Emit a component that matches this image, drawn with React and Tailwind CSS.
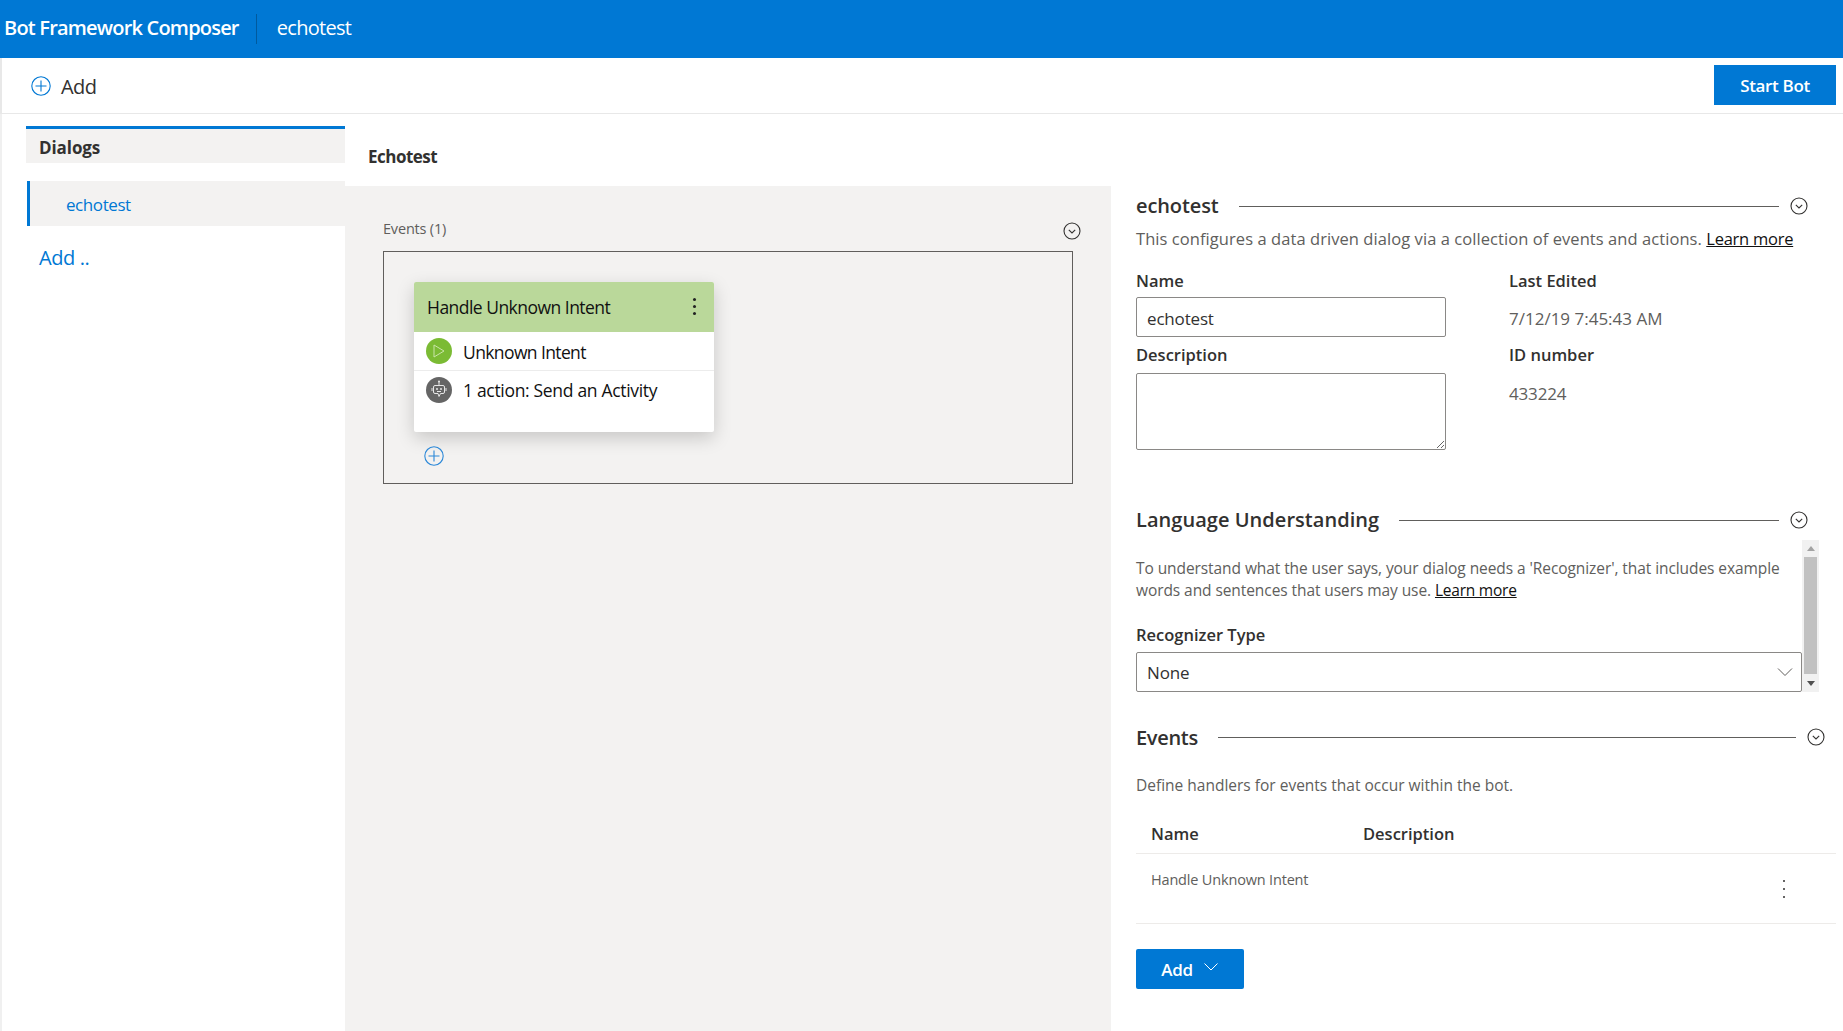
import React from 'react';

const ChevronCircle = ({ className = "" }) => (
  <svg width="18" height="18" viewBox="0 0 18 18" fill="none" stroke="#323130" className={className}>
    <circle cx="9" cy="9" r="8" strokeWidth="1.1" />
    <path d="M5.8 7.8 9 11l3.2-3.2" strokeWidth="1.1" />
  </svg>
);

const PlusCircle = ({ size = 20, color = "#0078d4" }) => (
  <svg width={size} height={size} viewBox="0 0 20 20" fill="none" stroke={color} strokeWidth="1.1">
    <circle cx="10" cy="10" r="9.2" />
    <path d="M10 4.5v11M4.5 10h11" />
  </svg>
);

const Dots = ({ dot = "bg-[#323130]", size = "w-[3px] h-[3px]", gap = "gap-[4px]" }) => (
  <div className={"flex flex-col " + gap}>
    <span className={"rounded-full " + size + " " + dot}></span>
    <span className={"rounded-full " + size + " " + dot}></span>
    <span className={"rounded-full " + size + " " + dot}></span>
  </div>
);

const SectionHead = ({ title, titleClass = "tracking-[-0.005em]" }) => (
  <div className="flex items-center h-[28px]">
    <h2 className={"text-[20px] font-semibold text-[#323130] leading-[28px] " + titleClass}>{title}</h2>
    <div className="h-px flex-1 bg-[#605e5c] ml-[20px] mr-[11px]"></div>
    <ChevronCircle />
  </div>
);

const FieldLabel = ({ children }) => (
  <label className="block text-[16.5px] font-semibold text-[#323130] leading-[24px]">{children}</label>
);

const Scrollbar = () => (
  <div className="absolute right-0 top-0 bottom-0 w-[17px] bg-[#f1f1f1] flex flex-col items-center">
    <svg width="8" height="17" viewBox="0 0 8 17" fill="#a3a3a3" className="shrink-0"><path d="M0 11 4 6l4 5z" /></svg>
    <div className="w-[13px] flex-1 bg-[#c1c1c1]"></div>
    <svg width="8" height="18" viewBox="0 0 8 18" fill="#505050" className="shrink-0"><path d="M0 7l4 5 4-5z" /></svg>
  </div>
);

const App = () => {
  return (
    <div className="w-full h-screen overflow-hidden bg-white flex flex-col font-['Open_Sans',sans-serif] text-[#323130]">
      <header className="h-[58px] shrink-0 bg-[#0078d4] flex items-center text-white">
        <span className="pl-[4px] pb-[2px] text-[20px] font-semibold tracking-[-0.04em] whitespace-nowrap">Bot Framework Composer</span>
        <span className="w-px h-[30px] bg-[#005a9e] ml-[17px]"></span>
        <span className="pl-[20px] pb-[2px] text-[20px] tracking-[-0.035em]">echotest</span>
      </header>

      <div className="h-[56px] shrink-0 border-b border-l-2 border-[#e8e8e8] flex items-start pt-[7px] pl-[29px] pr-[7px] justify-between">
        <div className="flex items-center gap-[10px] mt-[10px]">
          <PlusCircle />
          <span className="pt-[2px] text-[20px] leading-none tracking-[-0.03em]">Add</span>
        </div>
        <button className="w-[122px] h-[40px] pt-[2px] bg-[#0078d4] text-white text-[17px] font-semibold tracking-[-0.02em]">Start Bot</button>
      </div>

      <div className="flex flex-1 min-h-0">
        <aside className="w-[345px] shrink-0 pl-[26px] pt-[12px] border-l-2 border-[#f0f0f0]">
          <div className="border-t-[3px] border-[#0078d4] bg-[#f3f2f1] h-[37px] flex items-center pl-[13px] pt-[3px] -ml-[2px]">
            <span className="text-[17px] font-bold tracking-[-0.005em]">Dialogs</span>
          </div>
          <div className="mt-[18px] h-[45px] bg-[#f3f2f1] border-l-[3px] border-[#0078d4] flex items-center pl-[36px] pt-[2px] -ml-[1px]">
            <span className="text-[17px] text-[#0078d4] tracking-[-0.025em]">echotest</span>
          </div>
          <div className="mt-[17px] pl-[13px] -ml-[2px] text-[20px] leading-[30px] text-[#0078d4] tracking-[-0.02em]">Add ..</div>
        </aside>

        <main className="w-[766px] shrink-0 flex flex-col">
          <div className="h-[72px] shrink-0 pl-[23px] pt-[30px]">
            <h1 className="text-[17px] font-bold leading-[26px] tracking-[-0.03em]">Echotest</h1>
          </div>
          <div className="flex-1 bg-[#f3f2f1] pl-[38px] pr-[38px] pt-[33px]">
            <div className="flex items-start justify-between h-[32px]">
              <span className="text-[14.5px] leading-[20px] text-[#605e5c] tracking-[-0.013em]">Events (1)</span>
              <ChevronCircle className="mt-[3px] -mr-[8px]" />
            </div>
            <div className="h-[233px] border border-[#605e5c] pl-[30px] pt-[30px]">
              <div className="w-[300px] h-[150px] bg-white rounded-[2px] shadow-[0_6px_18px_rgba(0,0,0,0.18)] overflow-hidden">
                <div className="h-[50px] bg-[#bad89a] flex items-center justify-between pl-[13px] pr-[18px]">
                  <span className="text-[17.5px] text-[#111] tracking-[-0.03em]">Handle Unknown Intent</span>
                  <div className="-mt-[2px]"><Dots dot="bg-[#222]" /></div>
                </div>
                <div className="h-[39px] flex items-center pl-[12px] border-b border-[#ececec]">
                  <span className="w-[26px] h-[26px] rounded-full bg-[#7bbb34] flex items-center justify-center">
                    <svg width="14" height="16" viewBox="0 0 14 16" fill="none" stroke="#c9e4a8" strokeWidth="1"><path d="M2 2v12l10-6z" /></svg>
                  </span>
                  <span className="ml-[11px] pt-[2px] text-[17.5px] text-[#111] tracking-[-0.035em]">Unknown Intent</span>
                </div>
                <div className="pt-[6px] flex items-start pl-[12px]">
                  <span className="w-[26px] h-[26px] rounded-full bg-[#656565] flex items-center justify-center">
                    <svg width="18" height="20" viewBox="0 0 18 20" fill="none" stroke="#e6e6e6" strokeWidth="1">
                      <path d="M9 1v4M5 5.500h8a1.500 1.500 0 0 1 1.500 1.500v5a1.500 1.500 0 0 1-1.500 1.500h-2.500l-1.500 3-1-3H5A1.500 1.500 0 0 1 3.500 12V7A1.500 1.500 0 0 1 5 5.500zM2 8v3M16 8v3" />
                      <circle cx="9" cy="1.500" r="1" fill="#e6e6e6" stroke="none" />
                      <circle cx="7" cy="9" r="1" fill="#e6e6e6" stroke="none" />
                      <circle cx="11" cy="9" r="1" fill="#e6e6e6" stroke="none" />
                      <path d="M7 11.500h4" />
                    </svg>
                  </span>
                  <span className="ml-[11px] text-[17.5px] leading-[26px] text-[#111] tracking-[-0.018em]">1 action: Send an Activity</span>
                </div>
              </div>
              <div className="mt-[14px] ml-[10px]"><PlusCircle size={20} color="#2b88d8" /></div>
            </div>
          </div>
        </main>

        <section className="flex-1 min-w-0 pl-[25px] pr-[7px] pt-[78px]">
          <div className="pr-[28px]">
            <SectionHead title="echotest" />
          </div>
          <p className="mt-[7px] text-[16.5px] leading-[24px] text-[#605e5c] tracking-[0.004em] whitespace-nowrap">
            This configures a data driven dialog via a collection of events and actions. <a className="underline text-[#111] tracking-[-0.015em]">Learn more</a>
          </p>
          <div className="mt-[18px] flex">
            <div className="w-[373px] shrink-0">
              <FieldLabel>Name</FieldLabel>
              <input defaultValue="echotest" className="mt-[4px] block w-[310px] h-[40px] border border-[#8a8886] rounded-[2px] px-[10px] pt-[2px] text-[17px] text-[#323130] tracking-[-0.01em] outline-none" />
              <div className="mt-[6px]"><FieldLabel>Description</FieldLabel></div>
              <textarea className="mt-[6px] block w-[310px] h-[77px] border border-[#8a8886] rounded-[2px] outline-none"></textarea>
            </div>
            <div>
              <FieldLabel>Last Edited</FieldLabel>
              <div className="mt-[13px] text-[17px] leading-[26px] text-[#605e5c]">7/12/19 7:45:43 AM</div>
              <div className="mt-[11px]"><FieldLabel>ID number</FieldLabel></div>
              <div className="mt-[14px] text-[17px] leading-[26px] text-[#605e5c] tracking-[-0.01em]">433224</div>
            </div>
          </div>

          <div className="mt-[56px] pr-[28px]">
            <SectionHead title="Language Understanding" titleClass="tracking-[0.002em]" />
          </div>
          <div className="relative w-[683px] h-[152px] mt-[6px]">
            <Scrollbar />
            <div className="w-[666px] pt-[17px]">
              <p className="text-[15.5px] leading-[22px] text-[#605e5c] tracking-[-0.005em]">
                To understand what the user says, your dialog needs a 'Recognizer', that includes example words and sentences that users may use. <a className="underline text-[#111] tracking-[-0.015em]">Learn more</a>
              </p>
              <div className="mt-[22px]"><FieldLabel>Recognizer Type</FieldLabel></div>
              <div className="mt-[5px] h-[40px] border border-[#8a8886] rounded-[2px] flex items-center justify-between pl-[10px] pr-[8px]">
                <span className="pt-[2px] text-[17px] tracking-[-0.01em]">None</span>
                <svg width="16" height="16" viewBox="0 0 16 16" fill="none" stroke="#605e5c" strokeWidth="1"><path d="M1 4.500 8 11.500l7-7" /></svg>
              </div>
            </div>
          </div>

          <div className="mt-[31px] pr-[11px]">
            <SectionHead title="Events" titleClass="tracking-[-0.015em] pt-[1px]" />
          </div>
          <p className="mt-[23px] text-[15.5px] leading-[22px] text-[#605e5c]">Define handlers for events that occur within the bot.</p>
          <div className="mt-[25px] h-[33px] border-b border-[#edebe9] flex items-start pl-[15px] pt-[1px]">
            <span className="w-[212px] text-[16.5px] leading-[24px] font-semibold">Name</span>
            <span className="text-[16.5px] leading-[24px] font-semibold">Description</span>
          </div>
          <div className="h-[70px] border-b border-[#edebe9] flex items-start justify-between pl-[15px] pr-[51px]">
            <span className="mt-[16px] text-[14.5px] leading-[20px] text-[#605e5c] tracking-[-0.012em]">Handle Unknown Intent</span>
            <div className="mt-[26px]"><Dots size="w-[2px] h-[2px]" gap="gap-[6px]" /></div>
          </div>
          <button className="mt-[25px] w-[108px] h-[40px] bg-[#0078d4] rounded-[2px] text-white flex items-center justify-center gap-[10px]">
            <span className="pt-[2px] text-[17px] font-semibold tracking-[-0.02em]">Add</span>
            <svg width="16" height="16" viewBox="0 0 16 16" fill="none" stroke="#fff" strokeWidth="1" className="-mt-[4px]"><path d="M1.500 4.500 8 11l6.500-6.500" /></svg>
          </button>
        </section>
      </div>
    </div>
  );
};

export default App;
